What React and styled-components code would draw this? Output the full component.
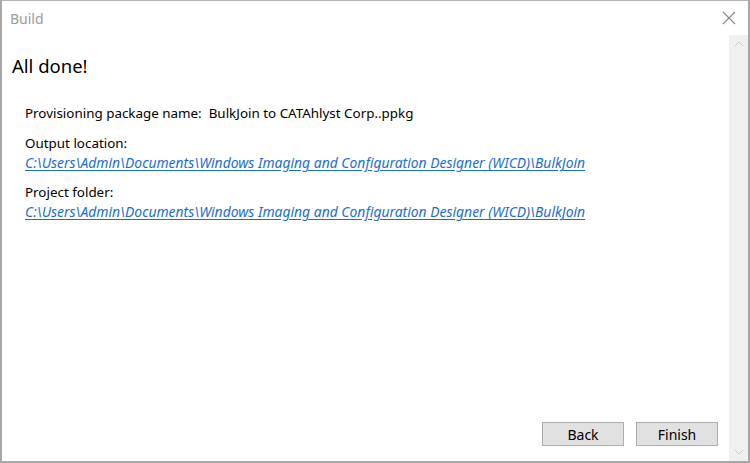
import React from 'react';
import styled, { createGlobalStyle } from 'styled-components';

const GlobalStyle = createGlobalStyle`
  html, body { margin: 0; padding: 0; background: #ffffff; }
  body { font-family: "Noto Sans", "Open Sans", sans-serif; }
`;

const Window = styled.div`
  width: 750px;
  height: 463px;
  box-sizing: border-box;
  border-top: 1px solid #b4b4b4;
  border-left: 2px solid #a8a8a8;
  border-right: 2px solid #a8a8a8;
  border-bottom: 2px solid #a8a8a8;
  display: flex;
  flex-direction: column;
  background: #ffffff;
`;

const TitleBar = styled.div`
  height: 34px;
  display: flex;
  align-items: center;
  justify-content: space-between;
  padding-left: 8px;
  padding-right: 12px;
`;

const TitleText = styled.span`
  font-size: 14px;
  color: #9a9a9a;
`;

const CloseButton = styled.button`
  border: none;
  background: none;
  padding: 0;
  width: 14px;
  height: 14px;
  display: flex;
  cursor: pointer;
`;

const Body = styled.div`
  flex: 1;
  display: flex;
  min-height: 0;
`;

const Content = styled.div`
  flex: 1;
  display: flex;
  flex-direction: column;
  padding: 16px 0 15px 10px;
`;

const Heading = styled.h1`
  margin: 0 0 23px 0;
  font-size: 18.5px;
  font-weight: 400;
  color: #000;
  line-height: 30px;
`;

const Details = styled.div`
  padding-left: 13px;
  display: flex;
  flex-direction: column;
  gap: 11px;
  flex: 1;
`;

const Field = styled.div`
  font-size: 13.4px;
  line-height: 19px;
  color: #000;
`;

const PathLink = styled.a`
  display: block;
  font-size: 13.9px;
  line-height: 19px;
  font-style: italic;
  color: #1a6ed2;
  text-decoration: underline;
  text-underline-offset: 2px;
`;

const Footer = styled.div`
  display: flex;
  justify-content: flex-end;
  gap: 12px;
  padding-right: 11px;
`;

const Button = styled.button`
  width: 82px;
  height: 24px;
  background: #e1e1e1;
  border: 1px solid #adadad;
  font-family: "Noto Sans", "Open Sans", sans-serif;
  font-size: 14px;
  color: #000;
  padding: 0;
`;

const ScrollBar = styled.div`
  width: 19px;
  background: #f0f0f0;
  display: flex;
  flex-direction: column;
  justify-content: space-between;
  align-items: center;
  padding: 6px 0 6px;
`;

const Chevron = ({ down }) => (
  <svg width="10" height="6" viewBox="0 0 10 6">
    <path
      d={down ? 'M1 1 L5 5 L9 1' : 'M1 5 L5 1 L9 5'}
      fill="none"
      stroke="#c8c8c8"
      strokeWidth="1"
    />
  </svg>
);

const path =
  'C:\\Users\\Admin\\Documents\\Windows Imaging and Configuration Designer (WICD)\\BulkJoin';

export default function App() {
  return (
    <>
      <GlobalStyle />
      <Window>
        <TitleBar>
          <TitleText>Build</TitleText>
          <CloseButton aria-label="Close">
            <svg width="14" height="14" viewBox="0 0 14 14">
              <path d="M1 1 L13 13 M13 1 L1 13" stroke="#8a8a8a" strokeWidth="1.1" />
            </svg>
          </CloseButton>
        </TitleBar>
        <Body>
          <Content>
            <Heading>All done!</Heading>
            <Details>
              <Field>Provisioning package name:&nbsp; BulkJoin to CATAhlyst Corp..ppkg</Field>
              <div>
                <Field>Output location:</Field>
                <PathLink href="#">{path}</PathLink>
              </div>
              <div>
                <Field>Project folder:</Field>
                <PathLink href="#">{path}</PathLink>
              </div>
            </Details>
            <Footer>
              <Button>Back</Button>
              <Button>Finish</Button>
            </Footer>
          </Content>
          <ScrollBar>
            <Chevron />
            <Chevron down />
          </ScrollBar>
        </Body>
      </Window>
    </>
  );
}
